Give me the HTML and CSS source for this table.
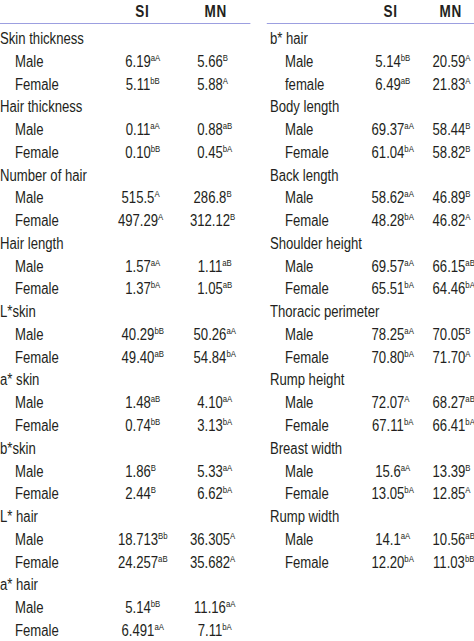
FILE: index.html
```html
<!DOCTYPE html>
<html>
<head>
<meta charset="utf-8">
<link rel="stylesheet" href="styles.css">
</head>
<body>
<div class="page">
  <div class="tbl left">
    <div class="head"><span></span><span class="h">SI</span><span class="h">MN</span></div>
    <div class="row cat">Skin thickness</div>
    <div class="row"><span class="lab">Male</span><span class="v">6.19<sup>aA</sup></span><span class="v">5.66<sup>B</sup></span></div>
    <div class="row"><span class="lab">Female</span><span class="v">5.11<sup>bB</sup></span><span class="v">5.88<sup>A</sup></span></div>
    <div class="row cat">Hair thickness</div>
    <div class="row"><span class="lab">Male</span><span class="v">0.11<sup>aA</sup></span><span class="v">0.88<sup>aB</sup></span></div>
    <div class="row"><span class="lab">Female</span><span class="v">0.10<sup>bB</sup></span><span class="v">0.45<sup>bA</sup></span></div>
    <div class="row cat">Number of hair</div>
    <div class="row"><span class="lab">Male</span><span class="v">515.5<sup>A</sup></span><span class="v">286.8<sup>B</sup></span></div>
    <div class="row"><span class="lab">Female</span><span class="v">497.29<sup>A</sup></span><span class="v">312.12<sup>B</sup></span></div>
    <div class="row cat">Hair length</div>
    <div class="row"><span class="lab">Male</span><span class="v">1.57<sup>aA</sup></span><span class="v">1.11<sup>aB</sup></span></div>
    <div class="row"><span class="lab">Female</span><span class="v">1.37<sup>bA</sup></span><span class="v">1.05<sup>aB</sup></span></div>
    <div class="row cat">L*skin</div>
    <div class="row"><span class="lab">Male</span><span class="v">40.29<sup>bB</sup></span><span class="v">50.26<sup>aA</sup></span></div>
    <div class="row"><span class="lab">Female</span><span class="v">49.40<sup>aB</sup></span><span class="v">54.84<sup>bA</sup></span></div>
    <div class="row cat">a* skin</div>
    <div class="row"><span class="lab">Male</span><span class="v">1.48<sup>aB</sup></span><span class="v">4.10<sup>aA</sup></span></div>
    <div class="row"><span class="lab">Female</span><span class="v">0.74<sup>bB</sup></span><span class="v">3.13<sup>bA</sup></span></div>
    <div class="row cat">b*skin</div>
    <div class="row"><span class="lab">Male</span><span class="v">1.86<sup>B</sup></span><span class="v">5.33<sup>aA</sup></span></div>
    <div class="row"><span class="lab">Female</span><span class="v">2.44<sup>B</sup></span><span class="v">6.62<sup>bA</sup></span></div>
    <div class="row cat">L* hair</div>
    <div class="row"><span class="lab">Male</span><span class="v">18.713<sup>Bb</sup></span><span class="v">36.305<sup>A</sup></span></div>
    <div class="row"><span class="lab">Female</span><span class="v">24.257<sup>aB</sup></span><span class="v">35.682<sup>A</sup></span></div>
    <div class="row cat">a* hair</div>
    <div class="row"><span class="lab">Male</span><span class="v">5.14<sup>bB</sup></span><span class="v">11.16<sup>aA</sup></span></div>
    <div class="row"><span class="lab">Female</span><span class="v">6.491<sup>aA</sup></span><span class="v">7.11<sup>bA</sup></span></div>
  </div>
  <div class="tbl right">
    <div class="head"><span></span><span class="h">SI</span><span class="h">MN</span></div>
    <div class="row cat">b* hair</div>
    <div class="row"><span class="lab">Male</span><span class="v">5.14<sup>bB</sup></span><span class="v">20.59<sup>A</sup></span></div>
    <div class="row"><span class="lab">female</span><span class="v">6.49<sup>aB</sup></span><span class="v">21.83<sup>A</sup></span></div>
    <div class="row cat">Body length</div>
    <div class="row"><span class="lab">Male</span><span class="v">69.37<sup>aA</sup></span><span class="v">58.44<sup>B</sup></span></div>
    <div class="row"><span class="lab">Female</span><span class="v">61.04<sup>bA</sup></span><span class="v">58.82<sup>B</sup></span></div>
    <div class="row cat">Back length</div>
    <div class="row"><span class="lab">Male</span><span class="v">58.62<sup>aA</sup></span><span class="v">46.89<sup>B</sup></span></div>
    <div class="row"><span class="lab">Female</span><span class="v">48.28<sup>bA</sup></span><span class="v">46.82<sup>A</sup></span></div>
    <div class="row cat">Shoulder height</div>
    <div class="row"><span class="lab">Male</span><span class="v">69.57<sup>aA</sup></span><span class="v">66.15<sup>aB</sup></span></div>
    <div class="row"><span class="lab">Female</span><span class="v">65.51<sup>bA</sup></span><span class="v">64.46<sup>bA</sup></span></div>
    <div class="row cat">Thoracic perimeter</div>
    <div class="row"><span class="lab">Male</span><span class="v">78.25<sup>aA</sup></span><span class="v">70.05<sup>B</sup></span></div>
    <div class="row"><span class="lab">Female</span><span class="v">70.80<sup>bA</sup></span><span class="v">71.70<sup>A</sup></span></div>
    <div class="row cat">Rump height</div>
    <div class="row"><span class="lab">Male</span><span class="v">72.07<sup>A</sup></span><span class="v">68.27<sup>aB</sup></span></div>
    <div class="row"><span class="lab">Female</span><span class="v">67.11<sup>bA</sup></span><span class="v">66.41<sup>bA</sup></span></div>
    <div class="row cat">Breast width</div>
    <div class="row"><span class="lab">Male</span><span class="v">15.6<sup>aA</sup></span><span class="v">13.39<sup>B</sup></span></div>
    <div class="row"><span class="lab">Female</span><span class="v">13.05<sup>bA</sup></span><span class="v">12.85<sup>A</sup></span></div>
    <div class="row cat">Rump width</div>
    <div class="row"><span class="lab">Male</span><span class="v">14.1<sup>aA</sup></span><span class="v">10.56<sup>aB</sup></span></div>
    <div class="row"><span class="lab">Female</span><span class="v">12.20<sup>bA</sup></span><span class="v">11.03<sup>bB</sup></span></div>
  </div>
</div>
</body>
</html>
```

FILE: styles.css
```css
html, body {
  margin: 0;
  padding: 0;
  background: #ffffff;
  overflow: hidden;
}

body {
  width: 474px;
  height: 641px;
  font-family: "Liberation Sans", Arial, sans-serif;
  font-size: 16px;
  color: #231f20;
}

/* the table uses a condensed face; Arial widths are narrowed to 82% */
.page {
  display: flex;
  gap: 20.7px;
  margin-left: -3px;
  width: 660px;
  transform: scaleX(0.82);
  transform-origin: 0 0;
}

.tbl {
  flex: none;
  display: flex;
  flex-direction: column;
}

.left {
  width: 308.5px;
}

.right {
  width: 320px;
}

.head,
.row {
  display: grid;
  height: 22.77px;
  line-height: 22.77px;
  white-space: nowrap;
}

.left .head,
.left .row {
  grid-template-columns: 125.6px 92.7px 82.9px 7.3px;
}

.right .head,
.right .row {
  grid-template-columns: 111px 73.2px 75.6px 60.2px;
}

.head {
  height: 23px;
  line-height: 23px;
  border-bottom: 1.5px solid #9c9fe0;
  margin-bottom: 4px;
}

.h {
  font-weight: bold;
  font-size: 16.5px;
  letter-spacing: 1px;
  text-align: center;
}

.left .h:nth-child(2) { padding-left: 10.8px; }
.left .h:nth-child(3) { padding-left: 14.2px; }
.right .h:nth-child(2) { padding-left: 6.5px; }
.right .h:nth-child(3) { padding-left: 4.4px; }

.cat {
  display: block;
  padding-left: 3.7px;
}

.lab {
  padding-left: 22px;
}

.v {
  text-align: center;
}

.v sup {
  display: inline-block;
  width: 0;
  font-size: 9.5px;
  line-height: 1;
  vertical-align: 6px;
  white-space: nowrap;
}
```
